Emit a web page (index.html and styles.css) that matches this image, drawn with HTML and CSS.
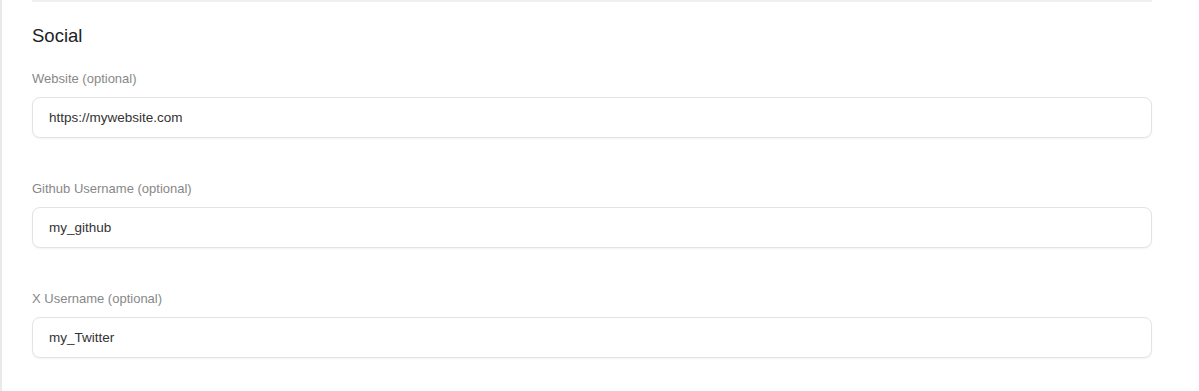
FILE: index.html
```html
<!DOCTYPE html>
<html>
<head>
  <title>Social</title>
  <link rel="stylesheet" href="styles.css">
</head>
<body>
  <div class="panel">
    <section class="section">
      <h2 class="section-heading">Social</h2>

      <div class="field">
        <label class="field-label" for="website">Website (optional)</label>
        <input class="field-input" id="website" type="text" value="https://mywebsite.com">
      </div>

      <div class="field">
        <label class="field-label" for="github">Github Username (optional)</label>
        <input class="field-input" id="github" type="text" value="my_github">
      </div>

      <div class="field">
        <label class="field-label" for="x">X Username (optional)</label>
        <input class="field-input" id="x" type="text" value="my_Twitter">
      </div>
    </section>
  </div>
</body>
</html>
```

FILE: styles.css
```css
html, body {
  margin: 0;
  padding: 0;
  background-color: #fff;
  font-family: "Liberation Sans", Arial, sans-serif;
}

.panel {
  border-left: 2px solid #e6ebe8;
  min-height: 391px;
  box-sizing: border-box;
  padding: 0 47px 0 30px;
}

.section {
  border-top: 2px solid #eef0ef;
}

.section-heading {
  font-size: 18.5px;
  font-weight: 400;
  color: #222;
  margin: 23px 0 0;
  line-height: 22px;
}

.field {
  display: flex;
  flex-direction: column;
  margin-top: 24px;
  margin-bottom: 43px;
}

.field + .field {
  margin-top: 0;
}

.field-label {
  font-size: 13px;
  color: #888;
  line-height: 16px;
  margin-bottom: 10px;
}

.field-input {
  height: 41px;
  box-sizing: border-box;
  border: 1px solid #e2e4e3;
  border-radius: 8px;
  box-shadow: 0 1px 2px rgba(0, 0, 0, 0.05);
  padding: 0 16px;
  font-family: inherit;
  font-size: 13.5px;
  color: #333;
  outline: none;
}
```
